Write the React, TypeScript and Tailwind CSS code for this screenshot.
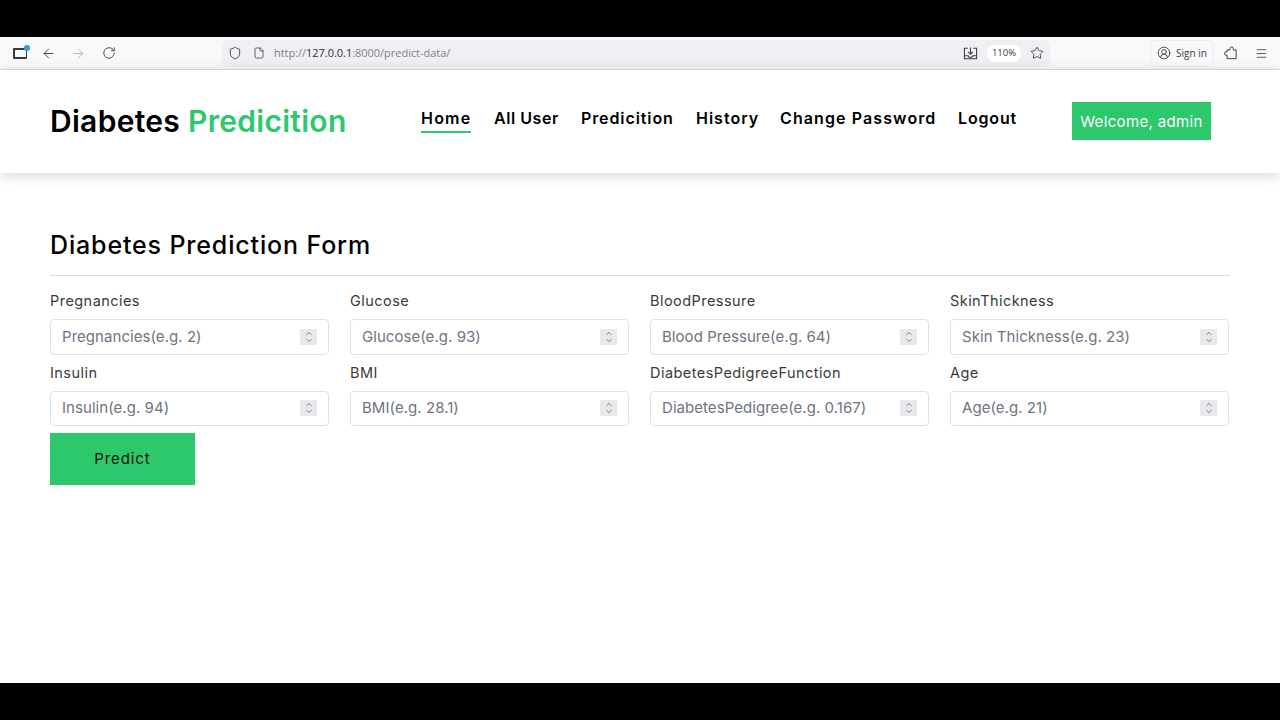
import { ArrowLeft, ArrowRight, ChevronDown, ChevronUp, CircleUserRound, Menu, RotateCw, Shield, Star, File } from 'lucide-react';

const font = { fontFamily: 'Inter, sans-serif' };

const fields = [
  { label: 'Pregnancies', hint: 'Pregnancies(e.g. 2)' },
  { label: 'Glucose', hint: 'Glucose(e.g. 93)' },
  { label: 'BloodPressure', hint: 'Blood Pressure(e.g. 64)' },
  { label: 'SkinThickness', hint: 'Skin Thickness(e.g. 23)' },
  { label: 'Insulin', hint: 'Insulin(e.g. 94)' },
  { label: 'BMI', hint: 'BMI(e.g. 28.1)' },
  { label: 'DiabetesPedigreeFunction', hint: 'DiabetesPedigree(e.g. 0.167)' },
  { label: 'Age', hint: 'Age(e.g. 21)' },
];

const links = [
  { label: 'Home', width: 'w-[50px] tracking-[1.2px]', active: true },
  { label: 'All User', width: 'w-[64px] tracking-[0.55px]' },
  { label: 'Predicition', width: 'w-[92px] tracking-[0.9px]' },
  { label: 'History', width: 'w-[60px] tracking-[1px]' },
  { label: 'Change Password', width: 'w-[155px] ml-[1px] tracking-[1.1px]' },
  { label: 'Logout', width: 'w-[58px] tracking-[0.85px]' },
];

function BrowserBar() {
  return (
    <div className="flex h-[33px] items-center border-b border-[#e0e0e2] bg-[#f9f9fb] text-[#3b3b3f]">
      <div className="relative ml-[13px] h-[11px] w-[14px] rounded-[1px] border-2 border-[#3a3a3e] border-r-[1.5px]">
        <div className="absolute -top-[5px] -right-[4px] size-[6px] rounded-full bg-[#2a9fe8]" />
      </div>
      <ArrowLeft className="ml-[14px] size-[15px]" strokeWidth={1.5} />
      <ArrowRight className="ml-[15px] size-[15px] text-[#b4b4b8]" strokeWidth={1.5} />
      <RotateCw className="ml-[16px] size-[14px]" strokeWidth={1.5} />
      <div className="ml-[106px] flex h-[27px] w-[828px] items-center rounded-[5px] bg-[#f0f0f4]">
        <Shield className="ml-[6px] size-[14px]" strokeWidth={1.5} />
        <File className="ml-[11px] size-[12px]" strokeWidth={1.5} />
        <span className="ml-[9px] text-[11px] tracking-[-0.03px] text-[#80808a]" style={{ fontFamily: '"Open Sans", sans-serif' }}>
          http://<span className="text-[#2f2f33]">127.0.0.1</span>:8000/predict-data/
        </span>
        <svg className="ml-auto size-[15px]" fill="none" stroke="currentColor" strokeWidth="1.1" viewBox="0 0 16 16">
          <path d="M5 2.5H1.5v11h13v-11H11" />
          <path d="M1.5 10.5h4l1 1.5h3l1-1.5h4" />
          <path d="M8 1.5v7M5.5 6.2 8 8.7l2.5-2.5" />
        </svg>
        <span className="ml-[9px] flex h-[17px] w-[34px] items-center justify-center rounded-[8px] bg-white text-[9.5px]" style={{ fontFamily: '"Open Sans", sans-serif' }}>110%</span>
        <Star className="mr-[6px] ml-[9px] size-[14px]" strokeWidth={1.5} />
      </div>
      <div className="ml-[100px] flex h-[27px] w-[64px] items-center justify-center gap-[5px] rounded-[5px] border border-[#eeeef0] text-[10px]" style={{ fontFamily: '"Open Sans", sans-serif' }}>
        <CircleUserRound className="size-[14px]" strokeWidth={1.5} />
        Sign in
      </div>
      <svg className="ml-[10px] size-[14px]" fill="none" stroke="currentColor" strokeWidth="1.1" viewBox="0 0 16 16">
        <path d="M3.5 14.5v-4H2.4a1.9 1.9 0 0 1 0-3.8h1.1V4.5h3.3V3a1.9 1.9 0 0 1 3.8 0v1.5h3.3v10z" />
      </svg>
      <Menu className="ml-[17px] size-[13px]" strokeWidth={1.5} />
    </div>
  );
}

function Field({ label, hint }: { label: string; hint: string }) {
  return (
    <div>
      <div className="h-[32px] pt-[4px] text-[14.5px] leading-[20px] tracking-[0.45px] text-[#3a3a3a]">{label}</div>
      <div className="flex h-[35.5px] items-center rounded-[4px] border border-[#dee2e6] pr-[11px] pl-[11px]">
        <span className="text-[15px] tracking-[0.05px] text-[#6f7480]">{hint}</span>
        <div className="ml-auto flex h-[16px] w-[17px] flex-col items-center justify-center bg-[#e9e9ed] text-[#5f5f66]">
          <ChevronUp className="-mb-[2px] size-[10px]" strokeWidth={2} />
          <ChevronDown className="size-[10px]" strokeWidth={2} />
        </div>
      </div>
    </div>
  );
}

export default function App() {
  return (
    <div className="flex h-[720px] flex-col overflow-hidden bg-black" style={font}>
      <div className="h-[37px] shrink-0" />
      <BrowserBar />
      <div className="flex-1 bg-white">
        <nav className="flex h-[103px] items-center bg-white pl-[50px] shadow-[0_2px_12px_rgba(0,0,0,0.18)]">
          <h1 className="w-[371px] text-[30px] font-semibold tracking-[0.3px] text-black">
            Diabetes <span className="text-[#2dc86c]">Predicition</span>
          </h1>
          <div className="-mt-[6px] flex w-[651px] gap-[23px]">
            {links.map((link) => (
              <a
                className={`${link.width} border-b-2 pt-[1px] pb-[1px] text-[16px] font-semibold whitespace-nowrap text-black ${link.active ? 'border-[#2dc86c]' : 'border-transparent'}`}
                key={link.label}
              >
                {link.label}
              </a>
            ))}
          </div>
          <div className="-mt-[1px] flex h-[38px] w-[139px] items-center justify-center bg-[#2dc86c] pt-[2px] text-[15px] tracking-[0.35px] text-white">
            Welcome, admin
          </div>
        </nav>
        <main className="px-[50px] pt-[54px]">
          <h2 className="text-[25px] leading-[36px] font-medium tracking-[0.85px] text-black">Diabetes Prediction Form</h2>
          <hr className="mt-[12px] border-[#dcdcdc]" />
          <div className="mt-[11px] grid w-[1179px] grid-cols-4 gap-x-[21px] gap-y-[4px]">
            {fields.map((field) => (
              <Field hint={field.hint} key={field.label} label={field.label} />
            ))}
          </div>
          <button className="mt-[7px] h-[52px] w-[145px] bg-[#2dc86c] text-[15px] tracking-[0.9px] text-[#111]">
            Predict
          </button>
        </main>
      </div>
      <div className="h-[37px] shrink-0" />
    </div>
  );
}
